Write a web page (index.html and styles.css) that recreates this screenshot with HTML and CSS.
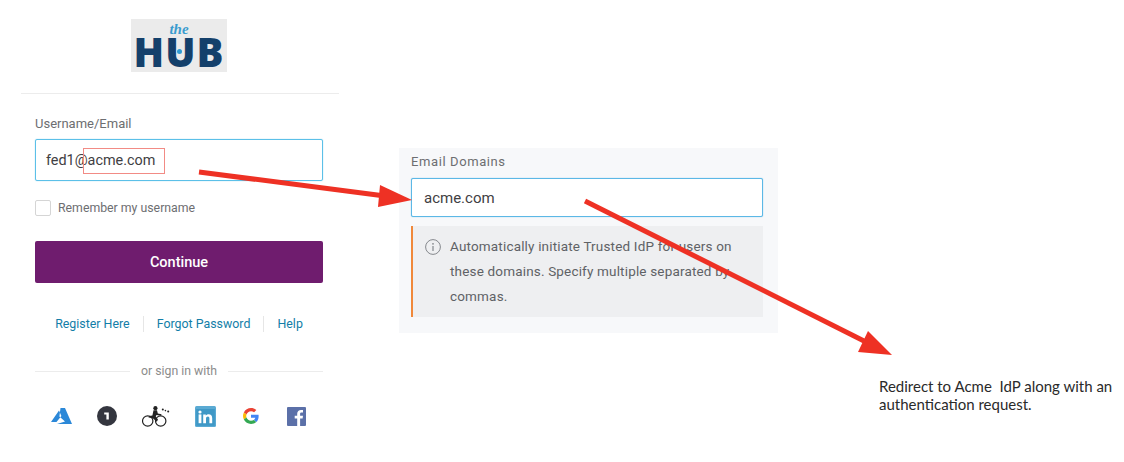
FILE: index.html
```html
<!DOCTYPE html>
<html>
<head>
  <meta charset="utf-8">
  <title>Trusted IdP redirect</title>
  <link rel="stylesheet" href="styles.css">
</head>
<body>
  <div class="page">
    <div class="login">
      <div class="logo-row">
        <div class="logo">
          <span class="logo-the">the</span>
          <span class="logo-hub">HUB</span>
          <span class="logo-dot"></span>
        </div>
      </div>

      <div class="login-form">
        <label class="field-label">Username/Email</label>
        <div class="login-input">
          fed1@acme.com
          <span class="highlight"></span>
        </div>

        <div class="remember">
          <span class="checkbox"></span>
          Remember my username
        </div>

        <div class="button">Continue</div>

        <div class="links">
          <a href="#">Register Here</a>
          <a href="#">Forgot Password</a>
          <a href="#">Help</a>
        </div>

        <div class="or-sign">or sign in with</div>

        <div class="providers">
          <svg class="icon-azure" viewBox="0 0 21 16">
            <path fill="#2b88d8" d="M9.5 0 L14 0 L21 16 L6 16 L14 13.6 L8.4 8.6 Z M8 2.6 L0 14 L5.5 14 L10.4 8 Z"/>
          </svg>
          <svg class="icon-one" viewBox="0 0 20 20">
            <circle cx="10" cy="10" r="10" fill="#34363f"/>
            <path fill="#fff" d="M7.2 6.400 L11.800 6.400 L11.800 13.600 L9.400 13.600 L9.400 8.600 L7.2 8.600 Z"/>
          </svg>
          <svg class="icon-bike" viewBox="0 0 28 21">
            <circle cx="5.7" cy="15" r="5.200" fill="none" stroke="#222" stroke-width="1.200"/>
            <circle cx="18.700" cy="15" r="5.200" fill="none" stroke="#222" stroke-width="1.200"/>
            <circle cx="13.400" cy="2.200" r="2.100" fill="#222"/>
            <path fill="#222" d="M11.500 4.200 L15 4.200 L15.800 7.400 L19.500 8.200 L19.200 9.800 L14.400 9 L13.800 10.800 L16 13.400 L14.800 15.800 L10.800 12.200 L6.500 11.600 L7 10 L10.400 9.400 Z"/>
            <circle cx="20.800" cy="3.600" r="1" fill="#222"/>
            <circle cx="23.400" cy="4.600" r="0.800" fill="#222"/>
            <circle cx="26.200" cy="5.600" r="1" fill="#222"/>
          </svg>
          <svg class="icon-linkedin" viewBox="0 0 21 21">
            <rect width="21" height="21" rx="1.500" fill="#5aaad3"/>
            <rect x="1.200" y="3" width="18.600" height="16.800" fill="#3f98c6"/>
            <rect x="3.600" y="8.400" width="2.800" height="8.800" fill="#fff"/>
            <circle cx="5" cy="6" r="1.600" fill="#fff"/>
            <path fill="#fff" d="M8.200 8.400 L10.800 8.400 L10.800 9.700 C11.400 8.700 12.400 8.200 13.600 8.200 C16 8.200 17.200 9.600 17.200 12.200 L17.200 17.200 L14.400 17.200 L14.400 12.600 C14.400 11.200 13.900 10.500 12.900 10.500 C11.800 10.500 11 11.300 11 12.700 L11 17.200 L8.200 17.200 Z"/>
          </svg>
          <svg class="icon-google" viewBox="0 0 48 48">
            <path fill="#ea4335" d="M24 9.500c3.500 0 6.700 1.200 9.200 3.600l6.900-6.900C35.900 2.400 30.500 0 24 0 14.600 0 6.500 5.400 2.600 13.200l8 6.200C12.400 13.700 17.700 9.500 24 9.500z"/>
            <path fill="#4285f4" d="M46.900 24.500c0-1.600-.1-3.100-.4-4.500H24v9h12.900c-.6 3-2.200 5.500-4.700 7.200l7.700 6c4.500-4.200 7-10.300 7-17.700z"/>
            <path fill="#fbbc05" d="M10.500 28.600c-.5-1.400-.8-3-.8-4.600s.3-3.200.8-4.600l-8-6.200C.9 16.500 0 20.100 0 24s.9 7.500 2.600 10.800l7.900-6.200z"/>
            <path fill="#34a853" d="M24 48c6.500 0 11.900-2.100 15.900-5.800l-7.700-6c-2.200 1.400-4.900 2.300-8.200 2.300-6.300 0-11.600-4.200-13.500-9.900l-8 6.200C6.500 42.600 14.600 48 24 48z"/>
          </svg>
          <svg class="icon-facebook" viewBox="0 0 19 19">
            <rect width="19" height="19" rx="1" fill="#5b70a8"/>
            <path fill="#fff" d="M13.100 19 L13.100 11.600 L15.600 11.600 L16 8.800 L13.100 8.800 L13.100 7 C13.100 6.200 13.400 5.600 14.500 5.600 L16 5.600 L16 3.100 C15.700 3.100 14.900 3 14 3 C11.800 3 10.200 4.300 10.200 6.800 L10.200 8.800 L7.700 8.800 L7.700 11.600 L10.200 11.600 L10.200 19 Z"/>
          </svg>
        </div>
      </div>
    </div>

    <div class="domains">
      <label class="field-label">Email Domains</label>
      <div class="domains-input">acme.com</div>
      <div class="hint">
        <svg class="hint-icon" viewBox="0 0 16 16">
          <circle cx="8" cy="8" r="7.400" fill="none" stroke="#85888d" stroke-width="1"/>
          <rect x="7.400" y="7" width="1.200" height="5" fill="#85888d"/>
          <circle cx="8" cy="4.800" r="0.900" fill="#85888d"/>
        </svg>
        <p>Automatically initiate Trusted IdP for users on these domains. Specify multiple separated by commas.</p>
      </div>
    </div>

    <p class="note">Redirect to Acme  IdP along with an authentication request.</p>
  </div>

  <svg class="arrows" viewBox="0 0 1124 462">
    <line x1="199" y1="172" x2="385" y2="196" stroke="#ee3124" stroke-width="5"/>
    <polygon points="380,185 412,200 378,207" fill="#ee3124"/>
    <line x1="585" y1="201" x2="868" y2="343" stroke="#ee3124" stroke-width="5"/>
    <polygon points="868,331 892,355 858,352" fill="#ee3124"/>
  </svg>
</body>
</html>
```

FILE: styles.css
```css
body {
  margin: 0;
  font-family: Roboto, "Liberation Sans", sans-serif;
  background: #fff;
}

.page {
  position: relative;
  display: flex;
  align-items: flex-start;
  width: 1124px;
  height: 462px;
  overflow: hidden;
}

.arrows {
  position: absolute;
  top: 0;
  left: 0;
  width: 1124px;
  height: 462px;
}

/* login card */
.login {
  width: 318px;
  margin-left: 21px;
  flex: none;
}

.logo-row {
  display: flex;
  justify-content: center;
  padding: 19px 2px 21px 0;
  border-bottom: 1px solid #ececec;
}

.logo {
  position: relative;
  width: 96px;
  height: 53px;
  background: #ebebeb;
  text-align: center;
}

.logo-the {
  position: absolute;
  top: 3px;
  left: 0;
  width: 100%;
  font-family: "Liberation Serif", serif;
  font-style: italic;
  font-weight: 700;
  font-size: 15px;
  line-height: 15px;
  color: #3a9ccf;
}

.logo-hub {
  position: absolute;
  top: 18px;
  left: 0;
  width: 100%;
  font-family: "Open Sans", sans-serif;
  font-weight: 800;
  font-size: 40px;
  line-height: 30px;
  letter-spacing: 1px;
  color: #14406b;
}

.logo-dot {
  position: absolute;
  top: 30px;
  left: 46px;
  width: 5px;
  height: 5px;
  border-radius: 50%;
  background: #2f9bd3;
}

.login-form {
  padding: 22px 16px 0 14px;
}

.field-label {
  display: block;
  font-size: 13px;
  line-height: 16px;
  color: #6d6e71;
}

.login-input {
  position: relative;
  box-sizing: border-box;
  height: 42px;
  margin-top: 7px;
  padding-left: 10px;
  border: 1px solid #5cc0e8;
  border-radius: 2px;
  box-shadow: 0 0 1px #5cc0e8;
  font-size: 14.400px;
  line-height: 41px;
  color: #3f4043;
}

.highlight {
  position: absolute;
  top: 8px;
  left: 47px;
  width: 82px;
  height: 26px;
  box-sizing: border-box;
  border: 1px solid #f28b85;
}

.remember {
  display: flex;
  align-items: center;
  gap: 7px;
  margin-top: 19px;
  font-size: 12.300px;
  line-height: 16px;
  color: #6d6e71;
}

.checkbox {
  box-sizing: border-box;
  width: 16px;
  height: 16px;
  border: 1px solid #d5d5d5;
  border-radius: 2px;
}

.button {
  height: 42px;
  margin-top: 25px;
  border-radius: 2px;
  background: #6f1c6e;
  color: #fff;
  font-size: 14.500px;
  font-weight: 500;
  line-height: 43px;
  text-align: center;
}

.links {
  display: flex;
  justify-content: center;
  margin-top: 33px;
  font-size: 12.400px;
  line-height: 16px;
}

.links a {
  padding: 0 13px;
  color: #137ea8;
  text-decoration: none;
  border-left: 1px solid #e6e6e6;
}

.links a:first-child {
  border-left: 0;
}

.or-sign {
  display: flex;
  align-items: center;
  gap: 11px;
  margin-top: 31px;
  font-size: 12.300px;
  line-height: 16px;
  color: #8c8c8c;
}

.or-sign::before,
.or-sign::after {
  content: "";
  flex: 1;
  border-top: 1px solid #ececec;
}

.providers {
  display: flex;
  align-items: center;
  gap: 25px;
  height: 22px;
  margin-top: 26px;
  padding-left: 16px;
}

.icon-azure {
  width: 21px;
  height: 16px;
}

.icon-one {
  width: 20px;
  height: 20px;
}

.icon-bike {
  width: 28px;
  height: 21px;
}

.icon-linkedin {
  width: 21px;
  height: 21px;
}

.icon-google {
  width: 16px;
  height: 16px;
  margin-left: 2px;
}

.icon-facebook {
  width: 19px;
  height: 19px;
  margin-left: 3px;
}

/* email domains panel */
.domains {
  box-sizing: border-box;
  width: 379px;
  height: 185px;
  flex: none;
  margin: 148px 0 0 60px;
  padding: 5px 15px 0 12px;
  background: #f7f8fa;
}

.domains .field-label {
  line-height: 17px;
  letter-spacing: 0.6px;
}

.domains-input {
  box-sizing: border-box;
  height: 39px;
  margin-top: 8px;
  padding-left: 12px;
  border: 1px solid #5cb8e6;
  border-radius: 2px;
  box-shadow: 0 0 1px #5cb8e6;
  background: #fff;
  font-size: 15px;
  line-height: 39px;
  color: #3f4043;
}

.hint {
  display: flex;
  box-sizing: border-box;
  height: 91px;
  margin-top: 9px;
  padding: 8px 12px 0 12px;
  gap: 9px;
  border-left: 2px solid #f0883a;
  background: #eeeff1;
}

.hint-icon {
  flex: none;
  width: 16px;
  height: 16px;
  margin-top: 5px;
}

.hint p {
  margin: 0;
  font-size: 13.500px;
  line-height: 25px;
  letter-spacing: 0.17px;
  color: #5f6266;
}

/* annotation */
.note {
  flex: none;
  width: 240px;
  margin: 377px 0 0 101px;
  font-family: Lato, "Noto Sans", sans-serif;
  font-size: 15px;
  line-height: 18px;
  white-space: pre-wrap;
  color: #2a2a2a;
}
```
